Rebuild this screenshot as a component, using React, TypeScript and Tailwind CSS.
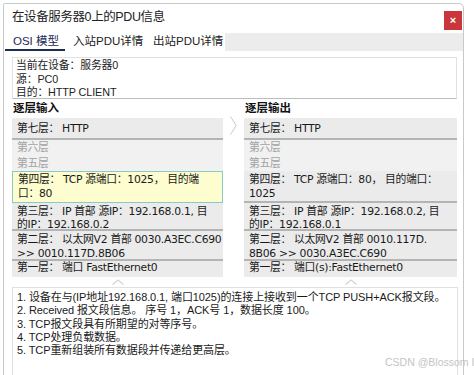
import React from "react";

const sansTop = { fontFamily: '"Liberation Sans", "Noto Sans CJK SC", sans-serif' };
const rowFont = { fontFamily: '"DejaVu Sans", "Noto Sans CJK SC", sans-serif' };

type Row = { lines: string[]; kind: "n" | "d" | "h"; h: number; pt: number; lh: number };

const leftRows: Row[] = [
  { lines: ["第七层： HTTP"], kind: "n", h: 22, pt: 4, lh: 13 },
  { lines: ["第六层"], kind: "d", h: 15, pt: 1, lh: 13 },
  { lines: ["第五层"], kind: "d", h: 16, pt: 2, lh: 13 },
  { lines: ["第四层： TCP 源端口：1025， 目的端", "口：80"], kind: "h", h: 32, pt: 1, lh: 14 },
  { lines: ["第三层： IP 首部 源IP：192.168.0.1, 目", "的IP：192.168.0.2"], kind: "n", h: 28, pt: 3, lh: 12.5 },
  { lines: ["第二层： 以太网V2 首部 0030.A3EC.C690", ">> 0010.117D.8B06"], kind: "n", h: 30, pt: 2, lh: 14 },
  { lines: ["第一层： 端口 FastEthernet0"], kind: "n", h: 18, pt: 0, lh: 13 },
];

const rightRows: Row[] = [
  { lines: ["第七层： HTTP"], kind: "n", h: 22, pt: 4, lh: 13 },
  { lines: ["第六层"], kind: "d", h: 15, pt: 1, lh: 13 },
  { lines: ["第五层"], kind: "d", h: 16, pt: 2, lh: 13 },
  { lines: ["第四层： TCP 源端口：80， 目的端口：", "1025"], kind: "n", h: 32, pt: 2, lh: 14 },
  { lines: ["第三层： IP 首部 源IP：192.168.0.2, 目", "的IP：192.168.0.1"], kind: "n", h: 28, pt: 3, lh: 12.5 },
  { lines: ["第二层： 以太网V2 首部 0010.117D.", "8B06 >> 0030.A3EC.C690"], kind: "n", h: 30, pt: 2, lh: 14 },
  { lines: ["第一层： 端口(s):FastEthernet0"], kind: "n", h: 18, pt: 0, lh: 13 },
];

function LayerRow({ r }: { r: Row }) {
  const base = "pl-[5px] text-[10.8px] tracking-[-0.3px] overflow-hidden shrink-0 whitespace-nowrap";
  let cls = "";
  if (r.kind === "d") cls = "bg-[#f1f1f1] text-[#a3a3a3]";
  else if (r.kind === "h") cls = "bg-[#fdfdcf] border border-[#86cbc4] text-[#1a1a1a] pl-[4px]";
  else cls = "bg-[#ebebeb] border-b-2 border-[#b4b4b4] text-[#1a1a1a]";
  return (
    <div
      className={`${base} ${cls}`}
      style={{ ...rowFont, height: r.h, paddingTop: r.pt, lineHeight: `${r.lh}px` }}
    >
      {r.lines.map((l, i) => (
        <div key={i}>{l}</div>
      ))}
    </div>
  );
}

function Column({ title, rows, width }: { title: string; rows: Row[]; width: number }) {
  return (
    <div className="flex flex-col" style={{ width }}>
      <div className="h-[18px] flex items-center text-[11.5px] font-bold text-[#111] pl-[1px]" style={sansTop}>
        {title}
      </div>
      <div className="flex flex-col h-[159px] overflow-hidden">
        {rows.map((r, i) => (
          <LayerRow key={i} r={r} />
        ))}
      </div>
      <div className="flex justify-center h-[10px] items-center">
        <svg width="12" height="6" viewBox="0 0 12 6">
          <polyline points="0.5,5.5 6,1 11.5,5.5" fill="none" stroke="#d2d2d2" strokeWidth="1.2" />
        </svg>
      </div>
    </div>
  );
}

export default function App() {
  return (
    <div className="w-[474px] h-[375px] bg-white overflow-hidden">
      <div
        className="ml-[3px] mt-[3px] w-[461px] h-[380px] border border-[#c9c9c9] rounded-tr-[5px] rounded-tl-[2px] bg-white flex flex-col relative"
        style={sansTop}
      >
        {/* Title bar */}
        <div className="h-[27px] flex items-center justify-between pl-[8px] pr-[1px] shrink-0">
          <span className="text-[12.5px] tracking-[-0.4px] text-[#222] -mt-[1px]">在设备服务器0上的PDU信息</span>
          <div className="w-[18px] h-[19px] bg-[#c9373b] flex items-center justify-center text-white text-[11px] font-bold mt-[5px]">
            ×
          </div>
        </div>
        {/* Tabs */}
        <div className="h-[18px] mt-[2px] flex items-stretch shrink-0 whitespace-nowrap">
          <div className="w-[60px] ml-[1px] relative flex items-center pl-[8px] text-[11.5px] text-[#1b2a55]">
            OSI 模型
            <div className="absolute left-0 right-0 bottom-0 h-[2px] bg-[#1c2d52]" />
          </div>
          <div className="flex items-center pl-[8px] w-[80px] text-[11.5px] text-[#222]">入站PDU详情</div>
          <div className="flex items-center pl-[8px] w-[80px] text-[11.5px] text-[#222]">出站PDU详情</div>
          <div className="flex-1 bg-[#ececec]" />
        </div>
        {/* Info box */}
        <div className="ml-[8px] mr-[6px] mt-[6px] h-[42px] border border-[#e2e2e2] border-b-[#bdbdbd] px-[3px] pt-[1px] text-[10.8px] tracking-[-0.1px] leading-[13.5px] text-[#222] shrink-0">
          <div>当前在设备：服务器0</div>
          <div>源：PC0</div>
          <div>目的：HTTP CLIENT</div>
        </div>
        {/* Layers */}
        <div className="flex ml-[8px] mt-[1px] shrink-0">
          <Column title="逐层输入" rows={leftRows} width={211} />
          <div className="w-[21px] flex justify-center pt-[16px]">
            <svg width="7" height="19" viewBox="0 0 7 19">
              <polyline points="0.5,0.5 6.2,9.5 0.5,18.5" fill="none" stroke="#c8c8c8" strokeWidth="1" />
            </svg>
          </div>
          <Column title="逐层输出" rows={rightRows} width={213} />
        </div>
        {/* Bottom box */}
        <div className="ml-[8px] mr-[5px] flex-1 border border-[#e0e0e0] px-[4px] pt-[3px] text-[11px] leading-[13.3px] text-[#1a1a1a] relative tracking-[-0.1px] whitespace-nowrap">
          <div>1. 设备在与(IP地址192.168.0.1, 端口1025)的连接上接收到一个TCP PUSH+ACK报文段。</div>
          <div>2. Received 报文段信息。 序号 1，ACK号 1，数据长度 100。</div>
          <div>3. TCP报文段具有所期望的对等序号。</div>
          <div>4. TCP处理负载数据。</div>
          <div>5. TCP重新组装所有数据段并传递给更高层。</div>
          <div className="absolute left-[372px] top-[68px] text-[10.5px] tracking-normal text-[#c4c4c4] whitespace-nowrap">CSDN @Blossom I</div>
        </div>
      </div>
    </div>
  );
}
